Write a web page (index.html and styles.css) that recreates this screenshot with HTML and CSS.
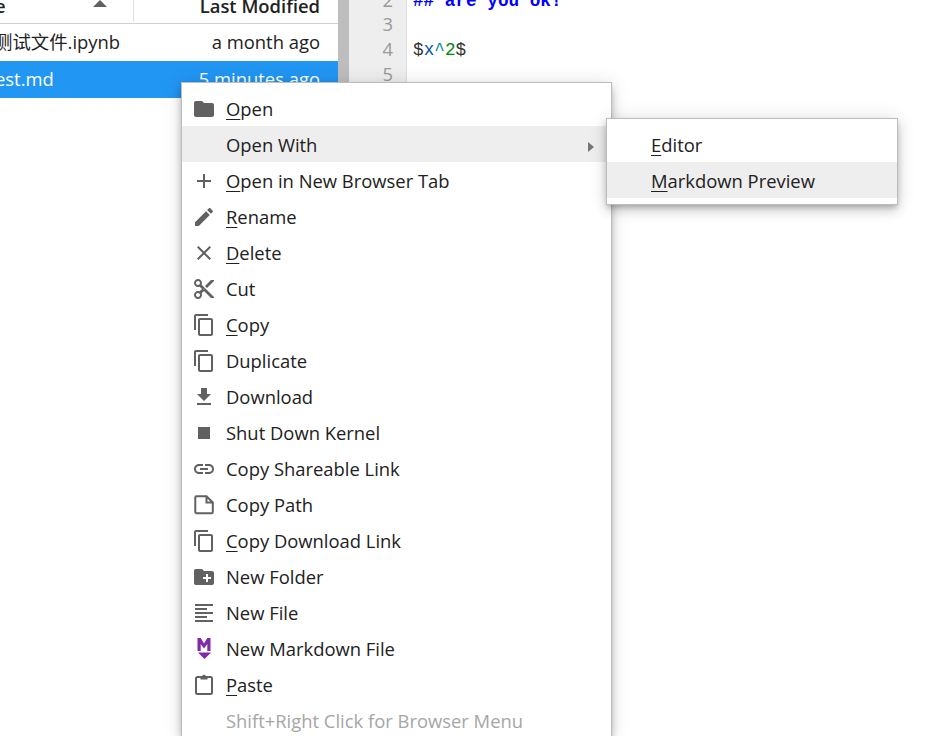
FILE: index.html
```html
<!DOCTYPE html>
<html lang="en">
<head>
<meta charset="utf-8">
<title>JupyterLab context menu</title>
<link rel="stylesheet" href="styles.css">
</head>
<body>
<svg class="defs" width="0" height="0" aria-hidden="true">
  <symbol id="i-copy" viewBox="0 0 24 24"><path d="M16 1H4c-1.100 0-2 .9-2 2v14h2V3h12V1zm3 4H8c-1.100 0-2 .9-2 2v14c0 1.100.9 2 2 2h11c1.100 0 2-.9 2-2V7c0-1.100-.9-2-2-2zm0 16H8V7h11v14z"/></symbol>
</svg>
<div class="app">
  <section class="files">
    <div class="files-head">
      <div class="col-name"><span class="head-e">e</span><span class="sort-up"></span></div>
      <div class="col-mod">Last Modified</div>
    </div>
    <div class="file-row"><span class="name-cn">测试文件.ipynb</span><span>a month ago</span></div>
    <div class="file-row selected"><span class="name-md">est.md</span><span>5 minutes ago</span></div>
  </section>
  <div class="split"></div>
  <section class="editor">
    <div class="gutter">
      <div class="ln">2</div><div class="ln">3</div><div class="ln">4</div><div class="ln">5</div>
    </div>
    <div class="code">
      <div class="cl h">## are you ok!</div>
      <div class="cl">&nbsp;</div>
      <div class="cl">$<span class="v">x</span><span class="o">^</span><span class="n">2</span>$</div>
    </div>
  </section>
</div>

<nav class="menu main-menu">
  <div class="item"><span class="ic"><svg viewBox="0 0 24 24"><path d="M10 4H4c-1.100 0-2 .9-2 2v12c0 1.100.9 2 2 2h16c1.100 0 2-.9 2-2V8c0-1.100-.9-2-2-2h-8l-2-2z"/></svg></span><span class="lb"><u>O</u>pen</span></div>
  <div class="item active"><span class="ic"></span><span class="lb">Open With</span><span class="arrow"></span></div>
  <div class="item"><span class="ic"><svg viewBox="0 0 24 24"><path d="M19 13h-6v6h-2v-6H5v-2h6V5h2v6h6v2z"/></svg></span><span class="lb"><u>O</u>pen in New Browser Tab</span></div>
  <div class="item"><span class="ic"><svg viewBox="0 0 24 24"><path d="M3 17.250V21h3.750L17.810 9.940l-3.750-3.750L3 17.250zM20.710 7.040c.39-.39.39-1.020 0-1.410l-2.340-2.340c-.39-.39-1.020-.39-1.410 0l-1.830 1.830 3.750 3.750 1.830-1.830z"/></svg></span><span class="lb"><u>R</u>ename</span></div>
  <div class="item"><span class="ic"><svg viewBox="0 0 24 24"><path d="M19 6.410 17.590 5 12 10.590 6.410 5 5 6.410 10.590 12 5 17.590 6.410 19 12 13.410 17.590 19 19 17.590 13.410 12z"/></svg></span><span class="lb"><u>D</u>elete</span></div>
  <div class="item"><span class="ic"><svg viewBox="0 0 24 24"><path d="M9.640 7.640c.23-.5.36-1.050.36-1.640 0-2.210-1.790-4-4-4S2 3.790 2 6s1.790 4 4 4c.59 0 1.140-.13 1.640-.36L10 12l-2.360 2.360C7.140 14.130 6.590 14 6 14c-2.210 0-4 1.790-4 4s1.790 4 4 4 4-1.790 4-4c0-.59-.13-1.140-.36-1.640L12 14l7 7h3v-1L9.640 7.640zM6 8c-1.100 0-2-.89-2-2s.9-2 2-2 2 .89 2 2-.9 2-2 2zm0 12c-1.100 0-2-.89-2-2s.9-2 2-2 2 .89 2 2-.9 2-2 2zm6-7.500c-.28 0-.5-.22-.5-.5s.22-.5.5-.5.5.22.5.5-.22.5-.5.500zM19 3l-6 6 2 2 7-7V3h-3z"/></svg></span><span class="lb">Cut</span></div>
  <div class="item"><span class="ic"><svg viewBox="0 0 24 24"><use href="#i-copy"/></svg></span><span class="lb"><u>C</u>opy</span></div>
  <div class="item"><span class="ic"><svg viewBox="0 0 24 24"><use href="#i-copy"/></svg></span><span class="lb">Duplicate</span></div>
  <div class="item"><span class="ic"><svg viewBox="0 0 24 24"><path d="M19 9h-4V3H9v6H5l7 7 7-7zM5 18v2h14v-2H5z"/></svg></span><span class="lb">Download</span></div>
  <div class="item"><span class="ic"><svg viewBox="0 0 24 24"><path d="M6 6h12v12H6z"/></svg></span><span class="lb">Shut Down Kernel</span></div>
  <div class="item"><span class="ic"><svg viewBox="0 0 24 24"><path d="M3.900 12c0-1.710 1.390-3.100 3.100-3.100h4V7H7c-2.760 0-5 2.240-5 5s2.240 5 5 5h4v-1.900H7c-1.710 0-3.100-1.390-3.100-3.100zM8 13h8v-2H8v2zm9-6h-4v1.900h4c1.710 0 3.100 1.390 3.100 3.100s-1.390 3.100-3.100 3.100h-4V17h4c2.760 0 5-2.240 5-5s-2.240-5-5-5z"/></svg></span><span class="lb">Copy Shareable Link</span></div>
  <div class="item"><span class="ic"><svg viewBox="0 0 24 24"><path class="ol" d="M4.500 3.200H14.500L20.800 9.500V19a1.200 1.200 0 0 1-1.200 1.200H4.500a1.200 1.200 0 0 1-1.200-1.200V4.400a1.200 1.200 0 0 1 1.200-1.200zM14.500 3.200V9.500H20.800"/></svg></span><span class="lb">Copy Path</span></div>
  <div class="item"><span class="ic"><svg viewBox="0 0 24 24"><use href="#i-copy"/></svg></span><span class="lb"><u>C</u>opy Download Link</span></div>
  <div class="item"><span class="ic"><svg viewBox="0 0 24 24"><path d="M20 6h-8l-2-2H4c-1.110 0-1.990.89-1.990 2L2 18c0 1.110.89 2 2 2h16c1.110 0 2-.89 2-2V8c0-1.110-.89-2-2-2zm-1 8h-3v3h-2v-3h-3v-2h3V9h2v3h3v2z"/></svg></span><span class="lb">New Folder</span></div>
  <div class="item"><span class="ic"><svg viewBox="0 0 24 24"><path d="M15 15H3v2h12v-2zm0-8H3v2h12V7zM3 13h18v-2H3v2zm0 8h18v-2H3v2zM3 3v2h18V3H3z"/></svg></span><span class="lb">New File</span></div>
  <div class="item"><span class="ic"><svg viewBox="0 0 24 24" class="md"><path d="M5.500 1h3.200L12 6.500 15.300 1h3.200v13h-3.200V7L12 11.500 8.700 7v7H5.500zM6 15.500h13L12.500 22z"/></svg></span><span class="lb">New Markdown File</span></div>
  <div class="item"><span class="ic"><svg viewBox="0 0 24 24"><path class="ol" d="M5.500 4H18.500a1.500 1.500 0 0 1 1.500 1.500V19.500a1.500 1.500 0 0 1-1.500 1.500H5.500A1.500 1.500 0 0 1 4 19.500V5.500A1.500 1.500 0 0 1 5.500 4z"/><path d="M8.500 3H10.200a1.900 1.900 0 0 1 3.600 0H15.500V6.500H8.500z"/></svg></span><span class="lb"><u>P</u>aste</span></div>
  <div class="item disabled"><span class="ic"></span><span class="lb">Shift+Right Click for Browser Menu</span></div>
</nav>

<nav class="menu sub-menu">
  <div class="item"><span class="ic"></span><span class="lb"><u>E</u>ditor</span></div>
  <div class="item active"><span class="ic"></span><span class="lb"><u>M</u>arkdown Preview</span></div>
</nav>
</body>
</html>
```

FILE: styles.css
```css
html, body {
  margin: 0;
  padding: 0;
  height: 100%;
  background: #fff;
  overflow: hidden;
}
body {
  font-family: "Open Sans", "Noto Sans CJK SC", sans-serif;
  font-size: 18.400px;
  color: #212121;
}
.defs { position: absolute; }
.app {
  display: flex;
  height: 736px;
  width: 940px;
  overflow: hidden;
}
.files { width: 338px; flex: none; overflow: hidden; }
.files-head {
  display: flex;
  height: 23px;
  border-bottom: 1px solid #d0d0d0;
  overflow: hidden;
}
.col-name {
  width: 134px;
  flex: none;
  box-sizing: border-box;
  border-right: 1px solid #e0e0e0;
  display: flex;
  justify-content: space-between;
  align-items: flex-start;
  padding-right: 26px;
  height: 22px;
}
.head-e { font-weight: 600; line-height: 18px; margin: -3px 0 0 -5px; }
.sort-up {
  width: 0;
  height: 0;
  border-left: 7px solid transparent;
  border-right: 7px solid transparent;
  border-bottom: 7px solid #616161;
}
.col-mod {
  flex: 1;
  text-align: right;
  padding-right: 18px;
  font-weight: 600;
  line-height: 18px;
  margin-top: -3px;
}
.file-row {
  display: flex;
  justify-content: space-between;
  box-sizing: border-box;
  height: 37px;
  line-height: 36px;
  padding: 0 18px 0 0;
}
.file-row.selected { background: #2196f3; color: #fff; }
.name-cn { margin-left: -6px; }
.name-md { margin-left: -5px; }
.split { width: 11px; flex: none; background: #bdbdbd; }
.editor {
  flex: 1;
  display: flex;
  align-items: flex-start;
  margin-top: -12.400px;
}
.gutter {
  width: 58px;
  flex: none;
  height: 760px;
  box-sizing: border-box;
  background: #eee;
  border-right: 1px solid #ddd;
  text-align: right;
  color: #999;
  padding-right: 13px;
}
.ln { height: 24.800px; line-height: 24.800px; }
.code {
  padding: 1px 0 0 6px;
  font-family: "Liberation Mono", monospace;
  font-size: 17.700px;
}
.cl { height: 24.800px; line-height: 24.800px; color: #333; }
.cl.h { color: #00f; font-weight: 700; }
.v { color: #05a; }
.o { color: #0086a0; }
.n { color: #080; }

.menu {
  position: absolute;
  box-sizing: border-box;
  background: #fff;
  border: 1px solid #bdbdbd;
  box-shadow: 0 3px 5px -1px rgba(0,0,0,.2), 0 6px 10px 0 rgba(0,0,0,.14), 0 1px 18px 0 rgba(0,0,0,.12);
}
.main-menu {
  left: 181px;
  top: 82px;
  width: 431px;
  height: 654px;
  padding-top: 7px;
  border-bottom: 0;
  overflow: hidden;
}
.sub-menu {
  left: 606px;
  top: 118px;
  width: 292px;
  height: 87px;
  padding: 7px 0;
}
.item {
  display: flex;
  align-items: center;
  height: 36px;
  position: relative;
}
.item.active { background: #eee; }
.item.disabled { color: #a6a6a6; }
.ic {
  width: 44px;
  height: 26px;
  padding-top: 2px;
  box-sizing: border-box;
  flex: none;
  display: flex;
  justify-content: center;
}
.ic svg { width: 24px; height: 24px; fill: #616161; display: block; }
.ic svg.md { fill: #8228aa; }
.ic svg .ol { fill: none; stroke: #616161; stroke-width: 2; }
.lb { white-space: nowrap; }
.lb u { text-decoration-thickness: 1px; text-underline-offset: 3px; }
.arrow {
  position: absolute;
  right: 17px;
  top: 16px;
  width: 0;
  height: 0;
  border-top: 5px solid transparent;
  border-bottom: 5px solid transparent;
  border-left: 6px solid #757575;
}
```
